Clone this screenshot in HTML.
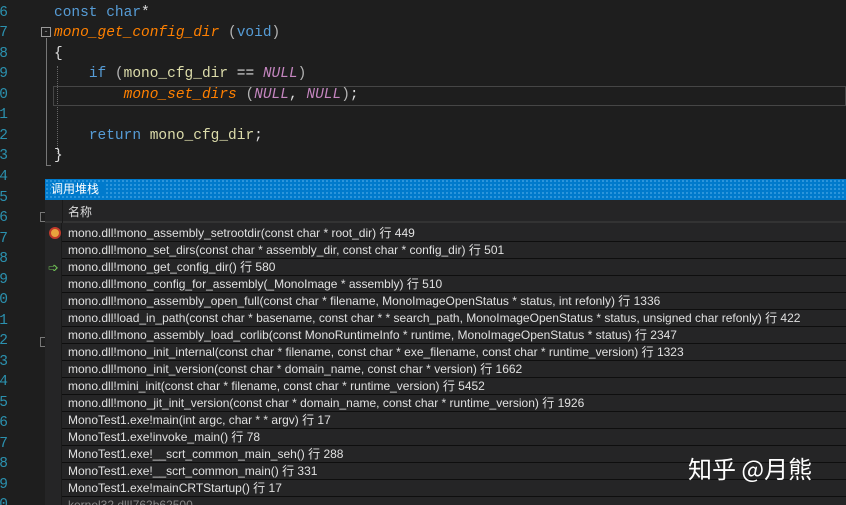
<!DOCTYPE html>
<html><head><meta charset="utf-8"><style>
*{margin:0;padding:0;box-sizing:border-box}
html,body{width:846px;height:505px;overflow:hidden}
body{background:#1e1e1e;position:relative;font-family:"Liberation Sans","Noto Sans CJK SC",sans-serif}
.ln{position:absolute;left:-20px;width:28px;text-align:right;color:#2b91af;font:14.5px "Liberation Mono",monospace}
.code{position:absolute;left:54px;font:14.5px "Liberation Mono",monospace;color:#dcdcdc;white-space:pre}
.k{color:#569cd6}.f{color:#ff8000;font-style:italic}.n{color:#b8d7a3}.m{color:#c586c0;font-style:italic}.v{color:#dcdcaa}.p{color:#b4b4b4}
#panel{position:absolute;left:45px;top:179px;width:801px;height:326px;background:#252526;overflow:hidden}
#title{height:21px;background:#007acc;color:#fff;font-size:12px;line-height:21px;padding-left:6px;background-image:radial-gradient(#3a9ee0 0.8px,transparent 1px);background-size:4px 4px}
#title span{background:#007acc;padding-right:6px}
#hdr{height:23px;border-bottom:2px solid #333;color:#dcdcdc;font-size:12px;line-height:24px;padding-left:23px;position:relative}
.gut{position:absolute;left:0;top:44px;width:17px;height:284px;background:#252526;border-right:1px solid #1a1a1a}
.row{position:absolute;left:17px;right:0;height:17px;border-bottom:1px solid #0e0e0e;color:#e0e0e0;font-size:12px;line-height:17px;padding-left:6px;white-space:nowrap}
</style></head><body>
<div class="ln" style="top:5px">6</div><div class="ln" style="top:25px">7</div><div class="ln" style="top:46px">8</div><div class="ln" style="top:66px">9</div><div class="ln" style="top:87px">0</div><div class="ln" style="top:107px">1</div><div class="ln" style="top:128px">2</div><div class="ln" style="top:148px">3</div><div class="ln" style="top:169px">4</div><div class="ln" style="top:190px">5</div><div class="ln" style="top:210px">6</div><div class="ln" style="top:231px">7</div><div class="ln" style="top:251px">8</div><div class="ln" style="top:272px">9</div><div class="ln" style="top:292px">0</div><div class="ln" style="top:313px">1</div><div class="ln" style="top:333px">2</div><div class="ln" style="top:354px">3</div><div class="ln" style="top:374px">4</div><div class="ln" style="top:395px">5</div><div class="ln" style="top:415px">6</div><div class="ln" style="top:436px">7</div><div class="ln" style="top:456px">8</div><div class="ln" style="top:477px">9</div><div class="ln" style="top:497px">0</div>
<div style="position:absolute;left:41px;top:27px;width:10px;height:10px;border:1px solid #999;color:#999;font-size:9px;line-height:7px;text-align:center">-</div>
<div style="position:absolute;left:46px;top:38px;width:1px;height:127px;background:#777"></div>
<div style="position:absolute;left:46px;top:165px;width:5px;height:1px;background:#777"></div>
<div style="position:absolute;left:57px;top:66px;width:0;height:88px;border-left:1px dotted #666"></div>
<div style="position:absolute;left:53px;top:86px;width:793px;height:20px;border:1px solid #464646"></div>
<div class="code" style="top:5px"><span class="k">const char</span>*</div>
<div class="code" style="top:25px"><span class="f">mono_get_config_dir</span> <span class="p">(</span><span class="k">void</span><span class="p">)</span></div>
<div class="code" style="top:46px">{</div>
<div class="code" style="top:66px">    <span class="k">if</span> <span class="p">(</span><span class="v">mono_cfg_dir</span> == <span class="m">NULL</span><span class="p">)</span></div>
<div class="code" style="top:87px">        <span class="f">mono_set_dirs</span> <span class="p">(</span><span class="m">NULL</span>, <span class="m">NULL</span><span class="p">)</span>;</div>
<div class="code" style="top:128px">    <span class="k">return</span> <span class="v">mono_cfg_dir</span>;</div>
<div class="code" style="top:148px">}</div>
<div style="position:absolute;left:40px;top:212px;width:6px;height:10px;border:1px solid #777;border-right:none"></div>
<div style="position:absolute;left:40px;top:337px;width:6px;height:10px;border:1px solid #777;border-right:none"></div>
<div id="panel">
<div id="title"><span>调用堆栈</span></div>
<div id="hdr"><span style="position:absolute;left:17px;top:0;width:1px;height:23px;background:#1a1a1a"></span>名称</div>
<div class="gut"></div>
<div style="position:absolute;left:4px;top:48px;width:12px;height:12px;border-radius:50%;background:#e8a33d;border:2px solid #c0392b"></div>
<div style="position:absolute;left:3px;top:82px;color:#6fbf55;font-size:13px;line-height:13px">➩</div>
<div class="row" style="top:46px">mono.dll!mono_assembly_setrootdir(const char * root_dir) 行 449</div>
<div class="row" style="top:63px">mono.dll!mono_set_dirs(const char * assembly_dir, const char * config_dir) 行 501</div>
<div class="row" style="top:80px">mono.dll!mono_get_config_dir() 行 580</div>
<div class="row" style="top:97px">mono.dll!mono_config_for_assembly(_MonoImage * assembly) 行 510</div>
<div class="row" style="top:114px">mono.dll!mono_assembly_open_full(const char * filename, MonoImageOpenStatus * status, int refonly) 行 1336</div>
<div class="row" style="top:131px">mono.dll!load_in_path(const char * basename, const char * * search_path, MonoImageOpenStatus * status, unsigned char refonly) 行 422</div>
<div class="row" style="top:148px">mono.dll!mono_assembly_load_corlib(const MonoRuntimeInfo * runtime, MonoImageOpenStatus * status) 行 2347</div>
<div class="row" style="top:165px">mono.dll!mono_init_internal(const char * filename, const char * exe_filename, const char * runtime_version) 行 1323</div>
<div class="row" style="top:182px">mono.dll!mono_init_version(const char * domain_name, const char * version) 行 1662</div>
<div class="row" style="top:199px">mono.dll!mini_init(const char * filename, const char * runtime_version) 行 5452</div>
<div class="row" style="top:216px">mono.dll!mono_jit_init_version(const char * domain_name, const char * runtime_version) 行 1926</div>
<div class="row" style="top:233px">MonoTest1.exe!main(int argc, char * * argv) 行 17</div>
<div class="row" style="top:250px">MonoTest1.exe!invoke_main() 行 78</div>
<div class="row" style="top:267px">MonoTest1.exe!__scrt_common_main_seh() 行 288</div>
<div class="row" style="top:284px">MonoTest1.exe!__scrt_common_main() 行 331</div>
<div class="row" style="top:301px">MonoTest1.exe!mainCRTStartup() 行 17</div>
<div class="row" style="top:318px;color:#888">kernel32.dll!762b62500</div>
</div>
<div style="position:absolute;left:688px;top:453px;color:#fff;font-size:24px;line-height:30px;font-family:'Noto Sans CJK SC',sans-serif;white-space:nowrap">知乎 @月熊</div>
</body></html>
